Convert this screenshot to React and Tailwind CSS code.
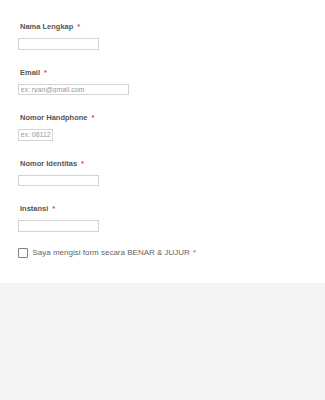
import React from 'react';

const fields = [
  { label: "Nama Lengkap", width: "w-[81px]", placeholder: "" },
  { label: "Email", width: "w-[111px]", placeholder: "ex: ryan@gmail.com" },
  { label: "Nomor Handphone", width: "w-[35px]", placeholder: "ex: 08112" },
  { label: "Nomor Identitas", width: "w-[81px]", placeholder: "" },
  { label: "Instansi", width: "w-[81px]", placeholder: "" },
];

const Star = ({ gap = "ml-[4px]" }) => <span className={`${gap} text-[#e0403e]`}>*</span>;

export default function App() {
  return (
    <div className="w-[325px] h-[400px] flex flex-col bg-[#f4f4f4] font-['Liberation_Sans',Arial,sans-serif]">
      <div className="h-[283px] bg-white px-[18px] pt-[22px]">
        {fields.map((f) => (
          <div key={f.label} className="h-[45.6px] flex flex-col">
            <div className="h-[16px] pl-[2px] text-[7.5px] leading-[9px] font-bold text-[#555]">
              {f.label}
              <Star />
            </div>
            <input
              type="text"
              placeholder={f.placeholder}
              className={`${f.width} h-[11.5px] border border-[#d4d4d4] bg-white px-[1.5px] text-[7px] text-[#555] placeholder:text-[#9a9a9a] outline-none`}
            />
          </div>
        ))}
        <label className="mt-[-2px] flex items-center gap-[5px]">
          <span className="w-[9.5px] h-[9.5px] border border-[#808080] rounded-[1px] bg-white" />
          <span className="text-[8px] leading-[10px] text-[#666]">
            Saya mengisi form secara BENAR &amp; JUJUR
            <Star gap="ml-[3px]" />
          </span>
        </label>
      </div>
    </div>
  );
}
